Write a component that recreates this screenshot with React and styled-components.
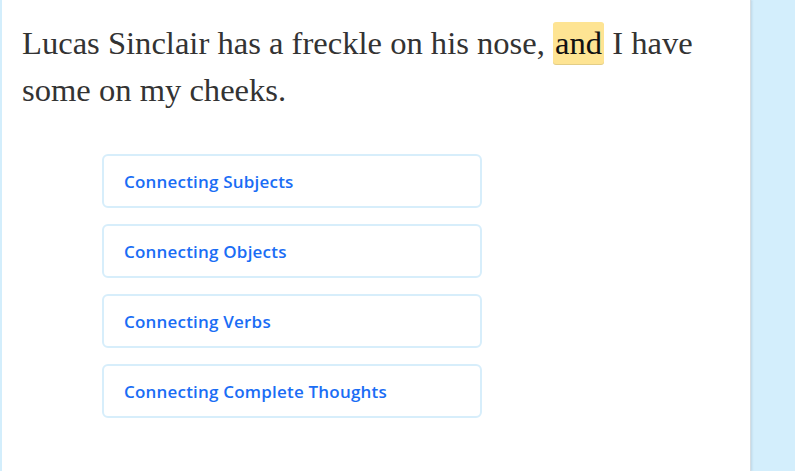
import React from "react";
import styled, { createGlobalStyle } from "styled-components";

const Global = createGlobalStyle`
  html, body { margin: 0; padding: 0; }
  body { background: #d3eefc; width: 795px; height: 471px; overflow: hidden; }
`;

const Page = styled.div`
  display: flex;
  height: 471px;
  padding-left: 2px;
`;

const Card = styled.div`
  width: 748px;
  background: #ffffff;
  box-shadow: 1px 0 0 #d6dde2, 2px 0 2px rgba(150, 170, 190, 0.35);
  padding: 20px 20px 0 20px;
  box-sizing: border-box;
`;

const Sentence = styled.p`
  margin: 0;
  font-family: "Liberation Serif", Georgia, serif;
  font-size: 32.6px;
  line-height: 47px;
  color: #333333;
`;

const Highlight = styled.span`
  display: inline-block;
  line-height: 42px;
  background: #fee493;
  color: #111111;
  border-radius: 3px;
  box-shadow: 0 1px 0 #e3cd86;
  padding: 0 2px;
`;

const Options = styled.div`
  display: flex;
  flex-direction: column;
  gap: 16px;
  margin: 40px 0 0 80px;
  width: 380px;
`;

const Option = styled.button`
  display: flex;
  align-items: center;
  height: 54px;
  padding: 0 20px;
  background: #ffffff;
  border: 2px solid #d7eefb;
  border-radius: 6px;
  box-sizing: border-box;
  font-family: "Open Sans", sans-serif;
  font-size: 17px;
  font-weight: 600;
  letter-spacing: 0.2px;
  color: #1a6df5;
  text-align: left;
  cursor: pointer;
`;

const items = [
  "Connecting Subjects",
  "Connecting Objects",
  "Connecting Verbs",
  "Connecting Complete Thoughts",
];

export default function App() {
  return (
    <>
      <Global />
      <Page>
        <Card>
          <Sentence>
            Lucas Sinclair has a freckle on his nose, <Highlight>and</Highlight> I have some on my cheeks.
          </Sentence>
          <Options>
            {items.map((t) => (
              <Option key={t}>{t}</Option>
            ))}
          </Options>
        </Card>
      </Page>
    </>
  );
}
